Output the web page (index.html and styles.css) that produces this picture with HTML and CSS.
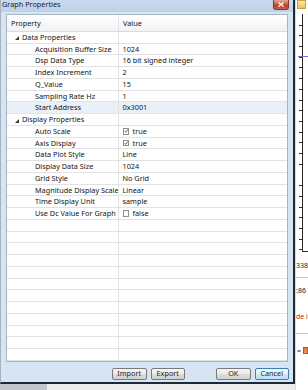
FILE: index.html
```html
<!DOCTYPE html>
<html>
<head>
<meta charset="utf-8">
<link rel="stylesheet" href="styles.css">
</head>
<body>
<div class="screen">
  <div class="dialog">
    <div class="titlebar">
      <span class="title">Graph Properties</span>
      <span class="close"><svg width="6" height="5" viewBox="0 0 6 5"><path d="M0.5 0.5 L5.5 4.5 M5.5 0.5 L0.5 4.5" stroke="#fff" stroke-width="1.3"/></svg></span>
    </div>
    <div class="grid">
      <div class="head"><div class="c1">Property</div><div class="c2">Value</div></div>
      <div class="row cat"><div class="c1"><svg class="tri" width="4" height="4" viewBox="0 0 4 4"><polygon points="4,0 4,4 0,4" fill="#3a3a3a"/></svg>Data Properties</div><div class="c2"></div></div>
      <div class="row"><div class="c1">Acquisition Buffer Size</div><div class="c2">1024</div></div>
      <div class="row"><div class="c1">Dsp Data Type</div><div class="c2">16 bit signed integer</div></div>
      <div class="row"><div class="c1">Index Increment</div><div class="c2">2</div></div>
      <div class="row"><div class="c1">Q_Value</div><div class="c2">15</div></div>
      <div class="row"><div class="c1">Sampling Rate Hz</div><div class="c2">1</div></div>
      <div class="row sel"><div class="c1">Start Address</div><div class="c2">0x3001</div></div>
      <div class="row cat"><div class="c1"><svg class="tri" width="4" height="4" viewBox="0 0 4 4"><polygon points="4,0 4,4 0,4" fill="#3a3a3a"/></svg>Display Properties</div><div class="c2"></div></div>
      <div class="row"><div class="c1">Auto Scale</div><div class="c2"><span class="box"><svg width="6" height="6" viewBox="0 0 6 6"><path d="M0.8 3.2 L2.3 4.8 L5.3 0.8" fill="none" stroke="#333" stroke-width="1"/></svg></span>true</div></div>
      <div class="row"><div class="c1">Axis Display</div><div class="c2"><span class="box"><svg width="6" height="6" viewBox="0 0 6 6"><path d="M0.8 3.2 L2.3 4.8 L5.3 0.8" fill="none" stroke="#333" stroke-width="1"/></svg></span>true</div></div>
      <div class="row"><div class="c1">Data Plot Style</div><div class="c2">Line</div></div>
      <div class="row"><div class="c1">Display Data Size</div><div class="c2">1024</div></div>
      <div class="row"><div class="c1">Grid Style</div><div class="c2">No Grid</div></div>
      <div class="row"><div class="c1">Magnitude Display Scale</div><div class="c2">Linear</div></div>
      <div class="row"><div class="c1">Time Display Unit</div><div class="c2">sample</div></div>
      <div class="row"><div class="c1">Use Dc Value For Graph</div><div class="c2"><span class="box"></span>false</div></div>
      <div class="row"><div class="c1"></div><div class="c2"></div></div>
      <div class="row"><div class="c1"></div><div class="c2"></div></div>
      <div class="row"><div class="c1"></div><div class="c2"></div></div>
      <div class="row"><div class="c1"></div><div class="c2"></div></div>
      <div class="row"><div class="c1"></div><div class="c2"></div></div>
      <div class="row"><div class="c1"></div><div class="c2"></div></div>
      <div class="row"><div class="c1"></div><div class="c2"></div></div>
      <div class="row"><div class="c1"></div><div class="c2"></div></div>
      <div class="row"><div class="c1"></div><div class="c2"></div></div>
      <div class="row"><div class="c1"></div><div class="c2"></div></div>
      <div class="row"><div class="c1"></div><div class="c2"></div></div>
      <div class="row"><div class="c1"></div><div class="c2"></div></div>
      <div class="row"><div class="c1"></div><div class="c2"></div></div>
    </div>
    <div class="buttons">
      <button class="btn">Import</button>
      <button class="btn">Export</button>
      <button class="btn ok">OK</button>
      <button class="btn focus">Cancel</button>
    </div>
  </div>
  <div class="side">
    <div class="side-top"><span class="app-icon"></span></div>
    <div class="axis"></div>
    <div class="blk b-num">338</div>
    <div class="blk b-86">:86 <span class="blue">(</span></div>
    <div class="blk b-red">de it</div>
    <div class="blk b-icons">= <span class="mini"></span></div>
  </div>
  <div class="floor"><span class="floor-dark"></span></div>
</div>
</body>
</html>
```

FILE: styles.css
```css
* { box-sizing: border-box; }
html, body { margin: 0; padding: 0; }
body {
  width: 308px;
  height: 390px;
  overflow: hidden;
  background: #ffffff;
  font-family: "Noto Sans", "Open Sans", sans-serif;
  font-size: 7.3px;
  color: #141414;
}
.screen {
  display: grid;
  grid-template-columns: 295px 13px;
  grid-template-rows: 384px 6px;
  width: 308px;
  height: 390px;
}
.dialog {
  grid-column: 1;
  grid-row: 1;
  display: flex;
  flex-direction: column;
  background: #d7e4f2;
  border-left: 1px solid #a3b3c4;
  border-right: 2px solid #1b2a3a;
  border-bottom: 2px solid #1b2a3a;
}
.titlebar {
  height: 12px;
  display: flex;
  align-items: flex-start;
  background: linear-gradient(#c9dbee, #bcd1e8);
  padding-left: 1px;
  padding-right: 4px;
}
.title {
  line-height: 9px;
  color: #1a1a1a;
}
.close {
  margin-left: auto;
  width: 16px;
  height: 9.5px;
  display: flex;
  align-items: center;
  justify-content: center;
  background: linear-gradient(#e3a895, #cf6047 45%, #b9402a 55%, #c8604a);
  border: 1px solid #8a3726;
  border-top: none;
  border-radius: 0 0 3px 3px;
}
.close svg { display: block; }
.grid {
  margin: 2px 5px 0 5px;
  height: 348px;
  background: #ffffff;
  border: 1px solid #a7b4c2;
  overflow: hidden;
}
.head {
  display: grid;
  grid-template-columns: 112px 1fr;
  height: 16.8px;
  background: linear-gradient(#ffffff, #f1f2f4);
  border-bottom: 1px solid #d8dce2;
}
.head .c1 {
  padding-left: 4px;
  line-height: 16px;
  border-right: 1px solid #e2e4e8;
}
.head .c2 {
  padding-left: 4px;
  line-height: 16px;
}
.row {
  display: grid;
  grid-template-columns: 112px 1fr;
  height: 11.75px;
  border-bottom: 1px solid #e2e2e2;
  line-height: 11px;
}
.row .c1 {
  padding-left: 28px;
  border-right: 1px solid #e2e2e2;
  white-space: nowrap;
  overflow: hidden;
}
.row .c2 {
  padding-left: 3.5px;
  display: flex;
  align-items: center;
  white-space: nowrap;
}
.row.cat .c1 {
  padding-left: 8px;
  display: flex;
  align-items: center;
  overflow: visible;
}
.tri {
  display: block;
  margin-right: 3px;
  margin-top: 2px;
}
.row.sel {
  background: #eaf0f8;
  border-bottom-color: #dde6f1;
}
.box {
  display: inline-flex;
  align-items: center;
  justify-content: center;
  width: 6.5px;
  height: 6.5px;
  border: 1px solid #8e8f8f;
  background: #fff;
  margin-right: 3.5px;
}
.box svg { display: block; }
.buttons {
  display: flex;
  align-items: flex-start;
  justify-content: flex-end;
  gap: 4px;
  padding-right: 4px;
  margin-top: 6px;
}
.btn {
  width: 34.5px;
  height: 11.5px;
  padding: 0;
  margin: 0;
  font-family: "Noto Sans", "Open Sans", sans-serif;
  font-size: 7.3px;
  line-height: 9px;
  color: #1e1e1e;
  border: 1px solid #7a7a7a;
  border-radius: 2px;
  background: linear-gradient(#f4f4f4, #ebebeb 48%, #dcdcdc 52%, #d0d0d0);
}
.btn.ok { margin-left: 27px; }
.btn.focus {
  border-color: #3c7fb1;
  background: linear-gradient(#f0f8fd, #e3f2fb 48%, #cfe8f7 52%, #c0e0f4);
}
.side {
  grid-column: 2;
  grid-row: 1 / 3;
  display: flex;
  flex-direction: column;
  background: #ffffff;
  border-left: 1px solid #d4dbe2;
  overflow: hidden;
}
.side-top {
  flex: none;
  height: 14px;
  padding-left: 1px;
}
.app-icon {
  display: block;
  width: 9px;
  height: 9px;
  background: linear-gradient(#fbe9a8, #e8c45a);
  border: 1px solid #c9a23c;
}
.axis {
  flex: none;
  height: 238px;
  background:
    linear-gradient(#7b6fd0, #7b6fd0) 2px 42px / 10px 1px no-repeat,
    linear-gradient(#2a2a2a, #2a2a2a) 6px 0 / 1px 100% no-repeat,
    linear-gradient(#2a2a2a, #2a2a2a) 6px 237px / 10px 1px no-repeat,
    repeating-linear-gradient(to bottom, transparent 0 9.7px, #303030 9.7px 10.7px) 3px 1px / 3px 100% no-repeat;
}
.blk {
  flex: none;
  white-space: nowrap;
  overflow: hidden;
  font-size: 7px;
  line-height: 9px;
  color: #222;
}
.b-num {
  height: 26px;
  padding-top: 9px;
  border-bottom: 1px solid #c8c8c8;
}
.b-86 {
  height: 25px;
  padding-top: 8px;
}
.blue { color: #3a6fc4; }
.b-red {
  height: 31px;
  padding-top: 9px;
  color: #d42020;
  border-bottom: 1px solid #c8c8c8;
}
.b-icons {
  height: 30px;
  padding-top: 12px;
  padding-left: 1px;
  display: flex;
  align-items: flex-start;
  gap: 2px;
}
.mini {
  display: inline-block;
  width: 6px;
  height: 7px;
  margin-top: 1px;
  background: linear-gradient(135deg, #e4623a, #f2b44a);
  border: 1px solid #b9552e;
}
.floor {
  grid-column: 1;
  grid-row: 2;
  display: flex;
  background: #ececec;
}
.floor-dark {
  width: 47px;
  background: #c3c7cc;
}
```
